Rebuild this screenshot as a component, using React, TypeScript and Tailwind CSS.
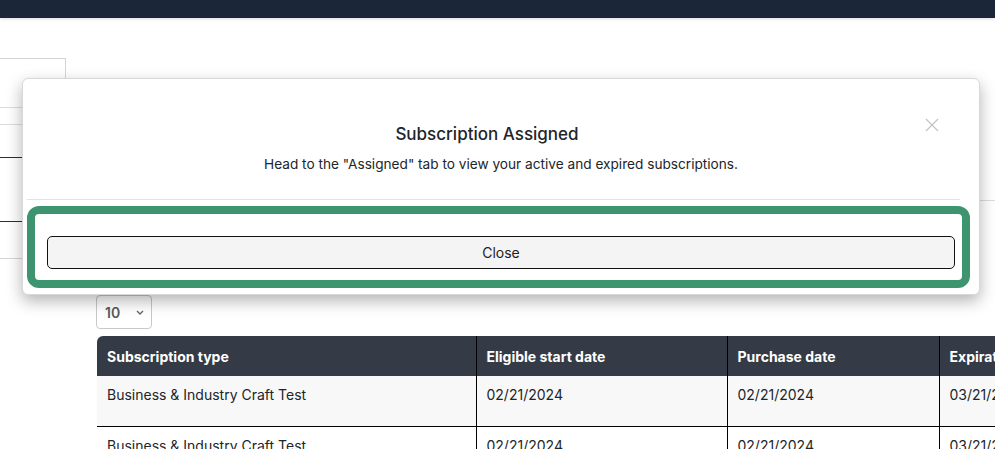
import React from "react";

const rows = [
  { type: "Business & Industry Craft Test", start: "02/21/2024", purchase: "02/21/2024", exp: "03/21/2024" },
  { type: "Business & Industry Craft Test", start: "02/21/2024", purchase: "02/21/2024", exp: "03/21/2024" },
];

export default function App() {
  return (
    <div className="relative h-[449px] w-[995px] overflow-hidden bg-white text-[#212529] font-['Inter','Liberation_Sans',sans-serif]">
      {/* top nav */}
      <div className="h-[18px] bg-[#1c2639] shadow-[0_1px_3px_rgba(0,0,0,0.15)]" />

      <div className="flex items-start">
        {/* left side list (mostly hidden by the dialog) */}
        <div className="mt-[40px] w-[66px] shrink-0 border border-l-0 border-[#d5d5d5]">
          <div className="h-[49px] border-b border-[#dcdcdc]" />
          <div className="h-[17px] border-b border-[#dcdcdc]" />
          <div className="h-[33px] border-b border-[#22304a]" />
          <div className="h-[64px] border-b border-[#22304a]" />
          <div className="h-[36px]" />
        </div>

        {/* main */}
        <div className="ml-[30px] flex-1">
          <div className="flex h-[183px] items-start justify-end border-b border-[#dcdcdc]">
            <span className="mt-[97px] mr-[-24px] text-[14px] text-[#222]">Options</span>
          </div>
          <div className="mt-[94px] flex h-[34px] w-[56px] items-center justify-between rounded-[4px] border border-[#c9c9c9] pl-[8px] pr-[6px]">
            <span className="text-[14px] font-semibold text-[#5a5a5a]">10</span>
            <svg width="10" height="10" viewBox="0 0 10 10" fill="none" stroke="#666" strokeWidth="1.4">
              <path d="M2 4l3 3 3-3" />
            </svg>
          </div>
          <table className="mt-[7px] ml-[1px] w-[1100px] table-fixed border-collapse text-left text-[14px]">
            <colgroup>
              <col className="w-[379px]" />
              <col className="w-[251px]" />
              <col className="w-[212px]" />
              <col />
            </colgroup>
            <thead>
              <tr className="h-[40px] bg-[#343a46] text-white">
                <th className="rounded-tl-[6px] px-[10px] font-bold">Subscription type</th>
                <th className="border-l border-black px-[10px] font-bold">Eligible start date</th>
                <th className="border-l border-black px-[10px] font-bold">Purchase date</th>
                <th className="border-l border-black px-[10px] font-bold">Expiration date</th>
              </tr>
            </thead>
            <tbody>
              {rows.map((r, i) => (
                <tr key={i} className={i % 2 === 0 ? "h-[50px] border-b border-black bg-[#f8f8f8]" : "h-[50px] bg-white"}>
                  <td className="px-[10px] pt-[8px] align-top">{r.type}</td>
                  <td className="border-l border-black px-[10px] pt-[8px] align-top">{r.start}</td>
                  <td className="border-l border-black px-[10px] pt-[8px] align-top">{r.purchase}</td>
                  <td className="border-l border-black px-[10px] pt-[8px] align-top">{r.exp}</td>
                </tr>
              ))}
            </tbody>
          </table>
        </div>
      </div>

      {/* dialog */}
      <div className="absolute left-[22px] top-[78px] flex h-[217px] w-[958px] flex-col rounded-[6px] border border-[#d8d8d8] bg-white shadow-[0_6px_16px_rgba(0,0,0,0.3)]">
        <div className="relative pt-[43px] pr-[28px]">
          <h2 className="text-center text-[17px] font-medium leading-[24px] text-[#212529]">Subscription Assigned</h2>
          <button className="absolute right-[40px] top-[39px] text-[#c4c4c4]">
            <svg width="14" height="14" viewBox="0 0 14 14" stroke="currentColor" strokeWidth="1.3">
              <path d="M1 1l12 12M13 1L1 13" />
            </svg>
          </button>
        </div>
        <p className="mt-[8px] text-center text-[13.65px] leading-[20px] text-[#212529]">
          Head to the "Assigned" tab to view your active and expired subscriptions.
        </p>
        <div className="mt-[25px] ml-[4px] mr-[19px] border-t border-[#dbe8e1]" />
        <div className="mt-[6px] ml-[4px] mr-[9px] rounded-[12px] border-[8px] border-[#3f9470] pt-[22px] pb-[11px] pl-[12px] pr-[7px]">
          <button className="flex h-[33px] w-full items-center justify-center rounded-[5px] border border-[#111] bg-[#f4f4f5] text-[14px] text-[#222]">
            Close
          </button>
        </div>
      </div>
    </div>
  );
}
